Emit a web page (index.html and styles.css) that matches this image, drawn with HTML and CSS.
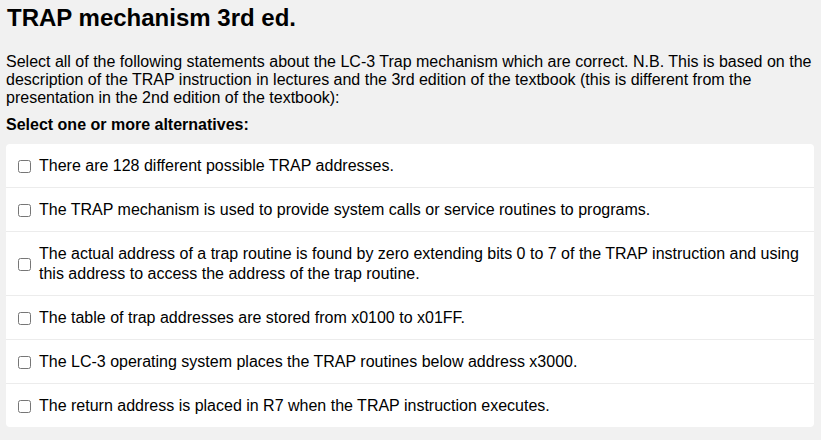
FILE: index.html
```html
<!DOCTYPE html>
<html lang="en">
  <head>
    <meta charset="UTF-8" />
    <meta name="viewport" content="width=device-width, initial-scale=1.0" />
    <title>TRAP mechanism 3rd ed.</title>
    <link rel="stylesheet" href="styles.css">
  </head>
  <body>
    <div class="question">
      <h2>TRAP mechanism 3rd ed.</h2>
      <p class="prompt">
        Select all of the following statements about the LC-3 Trap mechanism which are correct. N.B. This is based on the description of the TRAP instruction in lectures and the 3rd edition of the textbook (this is different from the presentation in the 2nd edition of the textbook):
      </p>
      <div class="hint">Select one or more alternatives:</div>

      <div class="answers">
        <label class="answer">
          <input type="checkbox" name="ans" value="1" />
          <span>There are 128 different possible TRAP addresses.</span>
        </label>
        <label class="answer">
          <input type="checkbox" name="ans" value="2" />
          <span>The TRAP mechanism is used to provide system calls or service routines to programs.</span>
        </label>
        <label class="answer">
          <input type="checkbox" name="ans" value="3" />
          <span>The actual address of a trap routine is found by zero extending bits 0 to 7 of the TRAP instruction and using this address to access the address of the trap routine.</span>
        </label>
        <label class="answer">
          <input type="checkbox" name="ans" value="4" />
          <span>The table of trap addresses are stored from x0100 to x01FF.</span>
        </label>
        <label class="answer">
          <input type="checkbox" name="ans" value="5" />
          <span>The LC-3 operating system places the TRAP routines below address x3000.</span>
        </label>
        <label class="answer">
          <input type="checkbox" name="ans" value="6" />
          <span>The return address is placed in R7 when the TRAP instruction executes.</span>
        </label>
      </div>
    </div>
  </body>
</html>
```

FILE: styles.css
```css
body {
  font-family: "Liberation Sans", Arial, sans-serif;
  font-size: 16px;
  margin: 0;
  background-color: #f1f1f1;
  color: #000;
}

.question {
  padding: 0 7px 0 6px;
}

h2 {
  font-size: 24px;
  font-weight: bold;
  margin: 0;
  padding: 4px 0 0 1px;
  line-height: 28px;
}

.prompt {
  margin: 21px 0 0;
  line-height: 18px;
}

.hint {
  font-weight: bold;
  margin-top: 9px;
  line-height: 18px;
}

.answers {
  margin-top: 10px;
  background: white;
  border-radius: 4px;
}

.answer {
  display: flex;
  align-items: center;
  gap: 5px;
  padding: 12px 8px 11px;
  line-height: 20px;
  border-bottom: 1px solid #ececec;
  cursor: pointer;
}

.answer:last-child {
  border-bottom: none;
}

.answer input {
  flex: none;
  margin: 0 3px 0 4px;
  width: 13px;
  height: 13px;
}
```
